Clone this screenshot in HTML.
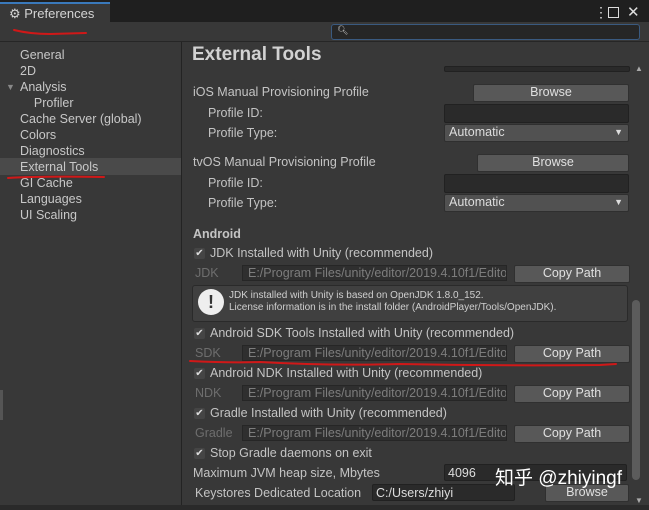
<html><head><style>
body{margin:0;width:649px;height:510px;background:#383838;font-family:"Liberation Sans",sans-serif;color:#c4c4c4;font-size:12.5px;position:relative;overflow:hidden}
.a{position:absolute;white-space:nowrap}
.fld{position:absolute;background:#2a2a2a;border:1px solid #212121;border-radius:2px}
.btn{position:absolute;background:#585858;border:1px solid #303030;border-radius:2px;text-align:center;color:#e0e0e0;line-height:15px}
.chk{position:absolute;width:11px;height:11px;background:#454545;border-radius:2px;font-size:10px;line-height:11px;text-align:center;color:#ddd}
.path{position:absolute;background:#2f2f2f;border:1px solid #262626;color:#7d7d7d;line-height:15px;padding-left:5px;overflow:hidden;white-space:nowrap;width:265px;height:16px;left:242px;box-sizing:border-box}
.dim{color:#6e6e6e}
.dd{position:absolute;background:#515151;border:1px solid #2f2f2f;border-radius:2px;color:#ddd;line-height:15px;padding-left:4px}
</style></head><body>
<div class="a" style="left:0;top:0;width:649px;height:22px;background:#1f1f1f"></div>
<div class="a" style="left:0;top:2px;width:110px;height:22px;background:#383838;border-top:2px solid #3a79bb;box-sizing:border-box"></div>
<div class="a" style="left:9px;top:6px;font-size:13px;color:#d4d4d4">⚙ Preferences</div>
<div class="a" style="left:594px;top:4px;font-size:14px;color:#ddd">⋮</div>
<div class="a" style="left:608px;top:7px;width:9px;height:9px;border:1.5px solid #ddd"></div>
<div class="a" style="left:627px;top:3px;font-size:15px;color:#ddd">✕</div>
<div class="a" style="left:0;top:41px;width:649px;height:1px;background:#262626"></div>
<div class="fld" style="left:331px;top:24px;width:307px;height:14px;border:1px solid #3a5a80;background:#262626;border-radius:3px"></div>
<div class="a" style="left:337px;top:25px;font-size:9px;color:#ccc">🔍︎</div>
<div class="a" style="left:181px;top:42px;width:1px;height:468px;background:#232323"></div>
<div class="a" style="left:0;top:158px;width:181px;height:17px;background:#4a4a4a"></div>
<div class="a" style="left:20px;top:47px;line-height:16px;color:#c8c8c8">General<br>2D<br>Analysis<br>&nbsp;&nbsp;&nbsp;&nbsp;Profiler<br>Cache Server (global)<br>Colors<br>Diagnostics<br>External Tools<br>GI Cache<br>Languages<br>UI Scaling</div>
<div class="a" style="left:6px;top:82px;font-size:9px;color:#888">▼</div>
<div class="a" style="left:0;top:390px;width:3px;height:30px;background:#555"></div>
<div class="a" style="left:192px;top:44px;font-size:19px;font-weight:bold;color:#d2d2d2">External Tools</div>
<div class="fld" style="left:444px;top:66px;width:184px;height:4px"></div>
<div class="a" style="left:635px;top:64px;font-size:8px;color:#aaa">▲</div>
<div class="a" style="left:632px;top:300px;width:8px;height:180px;background:#5c5c5c;border-radius:4px"></div>
<div class="a" style="left:635px;top:496px;font-size:8px;color:#aaa">▼</div>
<div class="a" style="left:193px;top:85px">iOS Manual Provisioning Profile</div>
<div class="btn" style="left:473px;top:84px;width:154px;height:16px">Browse</div>
<div class="a" style="left:208px;top:106px">Profile ID:</div>
<div class="fld" style="left:444px;top:104px;width:183px;height:17px"></div>
<div class="a" style="left:208px;top:126px">Profile Type:</div>
<div class="dd" style="left:444px;top:124px;width:179px;height:16px">Automatic<span style="position:absolute;right:5px;font-size:9px">▼</span></div>
<div class="a" style="left:193px;top:155px">tvOS Manual Provisioning Profile</div>
<div class="btn" style="left:477px;top:154px;width:150px;height:16px">Browse</div>
<div class="a" style="left:208px;top:176px">Profile ID:</div>
<div class="fld" style="left:444px;top:174px;width:183px;height:17px"></div>
<div class="a" style="left:208px;top:196px">Profile Type:</div>
<div class="dd" style="left:444px;top:194px;width:179px;height:16px">Automatic<span style="position:absolute;right:5px;font-size:9px">▼</span></div>
<div class="a" style="left:193px;top:227px;font-weight:bold">Android</div>
<div class="chk" style="left:194px;top:248px">✔</div><div class="a" style="left:210px;top:246px">JDK Installed with Unity (recommended)</div>
<div class="a dim" style="left:195px;top:266px">JDK</div><div class="path" style="top:265px">E:/Program Files/unity/editor/2019.4.10f1/Editor</div>
<div class="btn" style="left:514px;top:265px;width:114px;height:16px">Copy Path</div>
<div class="a" style="left:192px;top:285px;width:434px;height:35px;background:#404040;border:1px solid #2a2a2a;border-radius:3px"></div>
<div class="a" style="left:198px;top:289px;width:26px;height:26px;border-radius:13px;background:#eee;color:#333;font-weight:bold;font-size:18px;text-align:center;line-height:26px">!</div>
<div class="a" style="left:229px;top:290px;font-size:10px;line-height:12px;color:#cfcfcf">JDK installed with Unity is based on OpenJDK 1.8.0_152.<br>License information is in the install folder (AndroidPlayer/Tools/OpenJDK).</div>
<div class="chk" style="left:194px;top:328px">✔</div><div class="a" style="left:210px;top:326px">Android SDK Tools Installed with Unity (recommended)</div>
<div class="a dim" style="left:195px;top:346px">SDK</div><div class="path" style="top:345px">E:/Program Files/unity/editor/2019.4.10f1/Editor</div>
<div class="btn" style="left:514px;top:345px;width:114px;height:16px">Copy Path</div>
<div class="chk" style="left:194px;top:368px">✔</div><div class="a" style="left:210px;top:366px">Android NDK Installed with Unity (recommended)</div>
<div class="a dim" style="left:195px;top:386px">NDK</div><div class="path" style="top:385px">E:/Program Files/unity/editor/2019.4.10f1/Editor</div>
<div class="btn" style="left:514px;top:385px;width:114px;height:16px">Copy Path</div>
<div class="chk" style="left:194px;top:408px">✔</div><div class="a" style="left:210px;top:406px">Gradle Installed with Unity (recommended)</div>
<div class="a dim" style="left:195px;top:426px">Gradle</div><div class="path" style="top:425px">E:/Program Files/unity/editor/2019.4.10f1/Editor</div>
<div class="btn" style="left:514px;top:425px;width:114px;height:16px">Copy Path</div>
<div class="chk" style="left:194px;top:448px">✔</div><div class="a" style="left:210px;top:446px">Stop Gradle daemons on exit</div>
<div class="a" style="left:193px;top:466px">Maximum JVM heap size, Mbytes</div>
<div class="fld" style="left:444px;top:464px;width:183px;height:17px;color:#ddd;line-height:17px;padding-left:3px;box-sizing:border-box">4096</div>
<div class="a" style="left:195px;top:486px">Keystores Dedicated Location</div>
<div class="fld" style="left:372px;top:484px;width:143px;height:17px;color:#ddd;line-height:17px;padding-left:3px;box-sizing:border-box">C:/Users/zhiyi</div>
<div class="btn" style="left:545px;top:484px;width:82px;height:16px">Browse</div>
<div class="a" style="left:0;top:505px;width:649px;height:5px;background:#2a2a2a"></div>
<div class="a" style="left:495px;top:463px;font-size:19px;color:#fff;font-family:'Liberation Sans','Noto Sans CJK SC',sans-serif">知乎 @zhiyingf</div>
<svg class="a" style="left:0;top:0" width="649" height="510"><g fill="none" stroke="#d01818" stroke-width="2" stroke-linecap="round">
<path d="M14 30 Q30 34 50 34 L86 33"/>
<path d="M8 178 Q40 176 104 177"/>
<path d="M190 361 Q230 363 260 362 Q330 366 400 364 Q500 366 600 365 L616 364"/>
</g></svg>
</body></html>
